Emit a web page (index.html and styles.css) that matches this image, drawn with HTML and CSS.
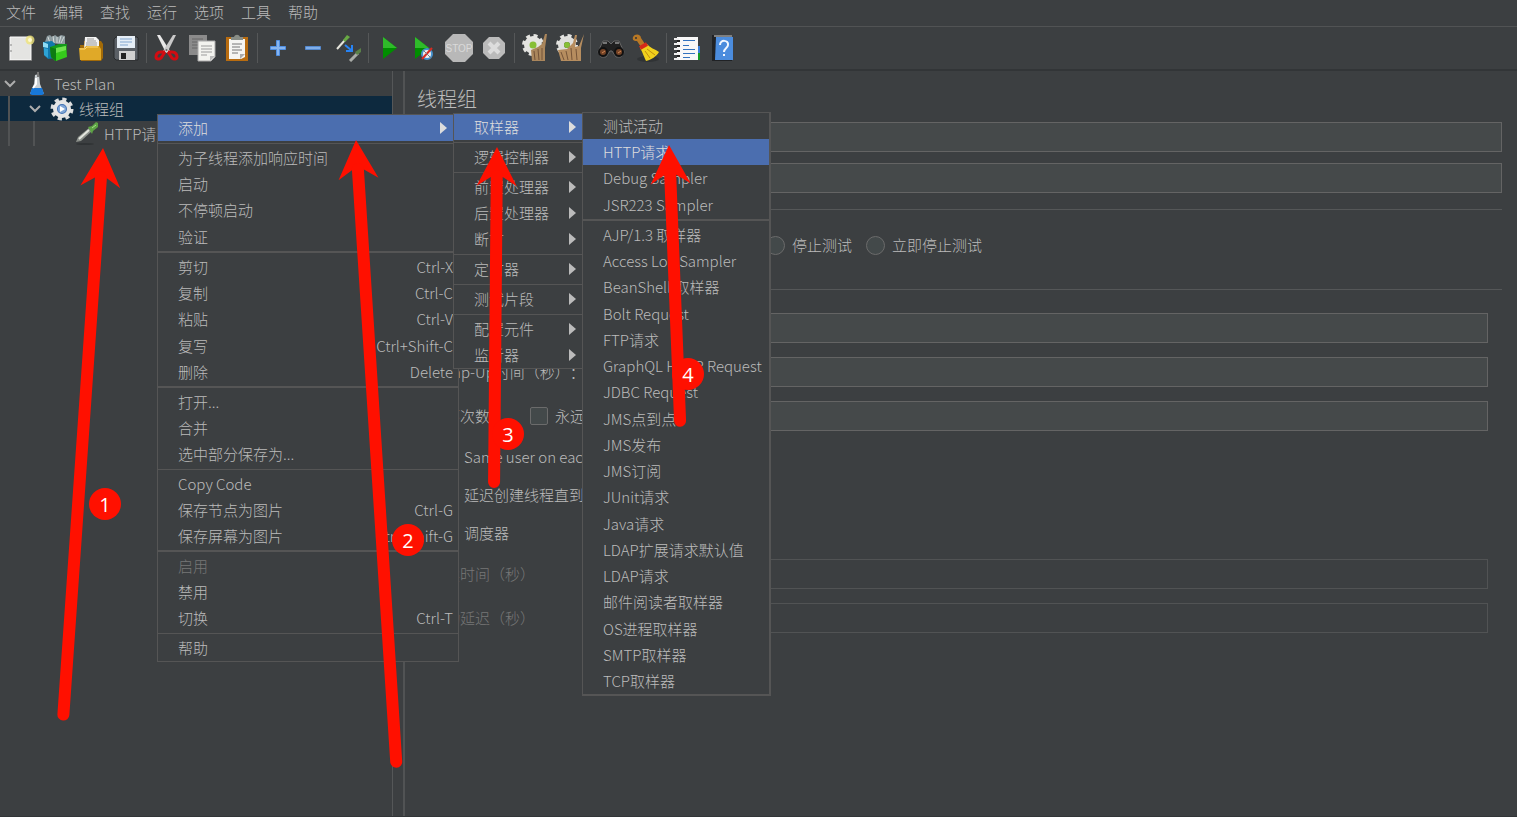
FILE: index.html
```html
<!DOCTYPE html>
<html lang="zh-CN">

<head>
    <meta charset="UTF-8">
    <meta name="viewport" content="width=device-width, initial-scale=1.0">
    <title>线程组</title>
    <link rel="stylesheet" href="styles.css">
</head>

<body>
    <nav class="menubar">
        <button>文件</button>
        <button>编辑</button>
        <button>查找</button>
        <button>运行</button>
        <button>选项</button>
        <button>工具</button>
        <button>帮助</button>
    </nav>

    <div class="toolbar">
        <button aria-label="新建">
            <svg viewBox="0 0 28 28"><path d="M3 3h21v23H3z" fill="#e4e4e2" stroke="#fafafa"/><path d="M3 11h2M3 17h2" stroke="#888"/><path d="M2 26.500h23" stroke="#777"/><circle cx="23" cy="6" r="4.500" fill="#efe37a" opacity=".8"/><circle cx="23" cy="6" r="2" fill="#fffbd0"/></svg>
        </button>
        <button aria-label="模板">
            <svg viewBox="0 0 28 28"><path d="M3 8l2-6 3-1 2 2 3-2 3 2 3-2 4 1v9z" fill="#8d9b9f"/><path d="M6 3l2 6M11 2l1 7M15 3v6M19 2l-2 7M22 3l-3 6" stroke="#d4dada"/><path d="M1 8l9-1 3 3v14l-7 1-4-4z" fill="#1178ac"/><path d="M1 8l5 2v4l-5-1z" fill="#8fdcf5"/><path d="M2 14l4 1v9l-4-3z" fill="#2ea3d6"/><path d="M8 13l9-3h8l-1 12-11 5-4-4z" fill="#149a1b"/><path d="M8 13l6 2v12l-5-4z" fill="#0d7b12"/><path d="M14 14l10-2 1 11-11 4z" fill="#35c91b"/><path d="M14 14l10-2v4l-10 3z" fill="#6fe34e"/></svg>
        </button>
        <button aria-label="打开">
            <svg viewBox="0 0 28 28"><path d="M3 11h4V7h17l2 3v14l-2 3H4z" fill="#a36b08"/><path d="M8 3h11l3 3v9H7z" fill="#f4f4f4"/><path d="M10 5h7M10 7h9M9 9h11M9 11h11" stroke="#999"/><path d="M2 14h5l2-2h13l2 3v11H3z" fill="#e0a928"/><path d="M3 15h5l2-2h11" stroke="#ffda76" fill="none"/></svg>
        </button>
        <button aria-label="保存">
            <svg viewBox="0 0 28 28"><path d="M4 3h21l1 1v22H4l-2-2V5z" fill="#5b6066" stroke="#282a2d"/><path d="M5 2h18v12H5z" fill="#e6eef6"/><path d="M8 5h12M8 8h12M8 11h8" stroke="#82a6cf"/><path d="M7 17h16v9H7z" fill="#d0d0d0"/><path d="M9 19h5v6H9z" fill="#222"/></svg>
        </button>
        <span class="divider"></span>
        <button aria-label="剪切">
            <svg viewBox="0 0 28 28"><path d="M4 1h3l10 16-4 2z" fill="#e8e8e8"/><path d="M23 1h-3L10 17l4 2z" fill="#c9c9c9"/><circle cx="13.500" cy="16" r="1" fill="#666"/><g fill="none" stroke="#d20c12" stroke-width="3"><path d="M12 18H8c-4 0-5 3-5 5s3 3 5 1l4-6M15 18h4c4 0 5 3 5 5s-3 3-5 1l-4-6"/></g></svg>
        </button>
        <button aria-label="复制">
            <svg viewBox="0 0 28 28"><path d="M1 1h18v20H1z" fill="#8b8b8b"/><path d="M4 5h11M4 8h7M4 11h7M4 14h7" stroke="#666"/><path d="M10 7h17v16l-4 4H10z" fill="#f3f3ef" stroke="#aaa"/><path d="M13 12h11M13 15h11M13 18h11M13 21h6" stroke="#9b9b9b"/><path d="M27 22h-5v5z" fill="#bbb"/></svg>
        </button>
        <button aria-label="粘贴">
            <svg viewBox="0 0 28 28"><path d="M3 3h22v24H3z" fill="#b86c10"/><path d="M6 5h16v18l-4 2H6z" fill="#f5f5f2"/><path d="M8 6V3h3c1-3 5-3 6 0h3v3z" fill="#888d86"/><path d="M9 10h10M9 13h8M9 16h10M9 19h6" stroke="#777"/><path d="M22 20h-5v5z" fill="#aaa"/></svg>
        </button>
        <span class="divider"></span>
        <button aria-label="展开">
            <svg viewBox="0 0 28 28"><path d="M12.500 6.500h3v6h6v3h-6v6h-3v-6h-6v-3h6z" fill="#86b5f0" stroke="#4f8fe3"/></svg>
        </button>
        <button aria-label="折叠">
            <svg viewBox="0 0 28 28"><path d="M6.500 12.500h15v3h-15z" fill="#80aee8" stroke="#5489ce"/></svg>
        </button>
        <button aria-label="切换">
            <svg viewBox="0 0 28 28"><path d="M3 15l8-9" stroke="#e5e5dc" stroke-width="2"/><path d="M9 6l4-5 3 2-5 5z" fill="#68a944"/><path d="M11 11l6 5m1-5v6h-6" stroke="#2783f4" stroke-width="2" fill="none"/><path d="M16 27l8-8" stroke="#a9aca8" stroke-width="3"/><path d="M21 18l6-4v4l-4 3z" fill="#5a8048"/></svg>
        </button>
        <span class="divider"></span>
        <button aria-label="启动">
            <svg viewBox="0 0 28 28"><path d="M8 3l14 11L8 25z" fill="#008d00"/><path d="M8 3l14 11H8z" fill="#2fbb2a"/></svg>
        </button>
        <button aria-label="不停顿启动">
            <svg viewBox="0 0 28 28"><path d="M5 3l14 11L5 25z" fill="#008d00"/><path d="M5 3l14 11H5z" fill="#2fbb2a"/><circle cx="17" cy="20" r="5" fill="#eee" stroke="#4692cf" stroke-width="2"/><path d="M12 25l10-11" stroke="#d62c22" stroke-width="2"/><path d="M13 16l8 8" stroke="#71808b"/></svg>
        </button>
        <button aria-label="停止">
            <svg viewBox="0 0 28 28"><path d="M8 0h12l8 8v12l-8 8H8l-8-8V8z" fill="#b8b8b8"/><text x="14" y="18" class="stop-text">STOP</text></svg>
        </button>
        <button aria-label="关闭">
            <svg viewBox="0 0 28 28"><path d="M9 3h10l6 6v10l-6 6H9l-6-6V9z" fill="#bbb"/><path d="M9 9l10 10M19 9L9 19" stroke="#ddd" stroke-width="4"/></svg>
        </button>
        <span class="divider"></span>
        <button aria-label="清除">
            <svg viewBox="0 0 28 28"><circle cx="12" cy="11" r="6" fill="none" stroke="#e4e4e1" stroke-width="6"/><circle cx="12" cy="11" r="9.500" fill="none" stroke="#e4e4e1" stroke-width="3" stroke-dasharray="4 3.500"/><circle cx="12" cy="11" r="3.500" fill="#87bf35"/><path d="M26 0l-2 14v13H11l-1-11 7-3 4-3 3-10z" fill="#aa865c"/><path d="M13 17l1 9M17 15l1 11M21 14v12" stroke="#725238"/></svg>
        </button>
        <button aria-label="清除全部">
            <svg viewBox="0 0 28 28"><circle cx="11" cy="11" r="6" fill="none" stroke="#dfdfdc" stroke-width="6"/><circle cx="11" cy="11" r="9.500" fill="none" stroke="#e4e4e1" stroke-width="3" stroke-dasharray="4 3.500"/><circle cx="11" cy="11" r="3" fill="#87bf35"/><path d="M19 1l-2 8-6 6-9 1 3 11h20V14l3-14-5 12-4 1 2-12z" fill="#b68d5f"/><path d="M5 18l3 8M10 17l2 9M15 14l1 12M20 15l1 11" stroke="#755438"/></svg>
        </button>
        <span class="divider"></span>
        <button aria-label="查找">
            <svg viewBox="0 0 28 28"><path d="M6 7l5 0 3 3 3-3h5l5 11-3 5h-5l-4-6h-2l-4 6H4l-3-5z" fill="#202020" stroke="#666"/><path d="M6 9h4M18 9h4" stroke="#ccc"/><circle cx="6" cy="18" r="4" fill="#744326" stroke="#111" stroke-width="2"/><circle cx="22" cy="18" r="4" fill="#744326" stroke="#111" stroke-width="2"/><path d="M5 19l3-2M21 19l3-2" stroke="#d28752"/></svg>
        </button>
        <button aria-label="重置查找">
            <svg viewBox="0 0 28 28"><ellipse cx="16" cy="25" rx="11" ry="3" fill="#303335"/><path d="M1 3c2-4 8-3 8 1l4 6-4 3-4-6C2 7 0 6 1 3z" fill="#b87825"/><circle cx="4" cy="4" r="1" fill="#333"/><path d="M8 14l7-4c3 4 8 5 12 8-2 4-8 8-13 9-2-4-3-8-6-13z" fill="#f0d01c"/><path d="M15 15l8 6M13 17l5 7" stroke="#c18c10"/><path d="M8 14l7-4" stroke="#d52a19" stroke-width="4"/></svg>
        </button>
        <span class="divider"></span>
        <button aria-label="函数助手">
            <svg viewBox="0 0 28 28"><path d="M24 12h3v7h-3z" fill="#3a7fd9"/><path d="M24 19h3v7h-3z" fill="#159a24"/><path d="M4 3h21v23H4z" fill="#f8f8f8"/><path d="M1 5h5M1 10h5M1 15h5M1 20h5M1 25h5" stroke="#eee" stroke-width="2"/><path d="M4 7h3M4 12h3M4 17h3M4 22h3" stroke="#222" stroke-width="2"/><path d="M10 6.500h12M10 11.500h6M10 15.500h12M10 19.500h12M10 23.500h7" stroke="#3272be"/></svg>
        </button>
        <button aria-label="帮助">
            <svg viewBox="0 0 28 28"><path d="M4 1h20v26H4z" fill="#202225"/><path d="M8 3h17v23H7z" fill="#4b8cdd"/><path d="M6 2h18" stroke="#ddd"/><path d="M12 11c0-6 9-5 8 0 0 3-4 3-4 7m0 2v2" stroke="#f2f7ff" stroke-width="2" fill="none"/></svg>
        </button>
    </div>

    <main class="main">
        <ul class="tree">
            <li class="node">
                <svg class="chevron" viewBox="0 0 12 12"><path d="M1 3l5 5 5-5"/></svg>
                <svg class="node-icon" viewBox="0 0 24 24"><path d="M10 3l4-1 1 10 4 10H5l4-10z" fill="#c9cfd2"/><path d="M13 0v5" stroke="#777" stroke-width="2"/><path d="M7 16h10l2 6-2 1H7l-2-1z" fill="#1878d8"/><path d="M11 6v6l-3 4" stroke="#fff" stroke-width="2" fill="none"/></svg>
                <span>Test Plan</span>
            </li>
            <li class="node selected">
                <i class="guide"></i>
                <svg class="chevron" viewBox="0 0 12 12"><path d="M1 3l5 5 5-5"/></svg>
                <svg class="node-icon" viewBox="0 0 24 24"><circle cx="12" cy="12" r="9.500" fill="none" stroke="#dedede" stroke-width="4" stroke-dasharray="4 3.460"/><circle cx="12" cy="12" r="7" fill="#3f70b3" stroke="#e6e6e6" stroke-width="4"/><circle cx="12" cy="12" r="4" fill="#7fa5d6"/><path d="M10 9l5 3-5 3z" fill="#fff"/></svg>
                <span>线程组</span>
            </li>
            <li class="node">
                <i class="guide"></i><i class="guide"></i>
                <svg class="node-icon" viewBox="0 0 24 24"><ellipse cx="10" cy="22" rx="9" ry="1" fill="#303335"/><path d="M1 20l2-5L14 6l3 3L6 19z" fill="#8c918b"/><path d="M4 17L14 8" stroke="#e4e6df" stroke-width="2"/><path d="M13 5l4-1 4-4 2 1v4l-5 4-1 3z" fill="#5da344"/><path d="M17 6l4-3" stroke="#a9df8d"/></svg>
                <span>HTTP请求</span>
            </li>
        </ul>

        <form class="panel">
            <h1>线程组</h1>
            <div class="row">
                <label for="name">名称：</label>
                <input id="name" type="text">
            </div>
            <div class="row">
                <label for="comment">注释：</label>
                <input id="comment" type="text">
            </div>

            <div class="section-title">在取样器错误后要执行的动作</div>
            <div class="radios">
                <label><input type="radio" name="action">继续</label>
                <label><input type="radio" name="action">启动下一进程循环</label>
                <label><input type="radio" name="action">停止线程</label>
                <label><input type="radio" name="action">停止测试</label>
                <label><input type="radio" name="action">立即停止测试</label>
            </div>

            <div class="section-title">线程属性</div>
            <div class="props">
                <div class="row">
                    <label for="threads">线程数：</label>
                    <input id="threads" type="text">
                </div>
                <div class="row">
                    <label for="ramp">Ramp-Up时间（秒）：</label>
                    <input id="ramp" type="text">
                </div>
                <div class="row">
                    <label class="short" for="loops">循环次数</label>
                    <label class="check"><input type="checkbox">永远</label>
                    <input id="loops" type="text">
                </div>
                <label class="check line"><input type="checkbox">Same user on each iteration</label>
                <label class="check line"><input type="checkbox">延迟创建线程直到需要</label>
                <label class="check line"><input type="checkbox">调度器</label>
                <div class="row">
                    <label class="off" for="duration">持续时间（秒）</label>
                    <input id="duration" type="text" disabled>
                </div>
                <div class="row">
                    <label class="off" for="delay">启动延迟（秒）</label>
                    <input id="delay" type="text" disabled>
                </div>
            </div>
        </form>
    </main>

    <!-- 右键菜单 -->
    <div class="menu menu-main">
        <div class="group">
            <button class="active arrow">添加</button>
        </div>
        <div class="group">
            <button>为子线程添加响应时间</button>
            <button>启动</button>
            <button>不停顿启动</button>
            <button>验证</button>
        </div>
        <div class="group thick">
            <button>剪切<kbd>Ctrl-X</kbd></button>
            <button>复制<kbd>Ctrl-C</kbd></button>
            <button>粘贴<kbd>Ctrl-V</kbd></button>
            <button>复写<kbd>Ctrl+Shift-C</kbd></button>
            <button>删除<kbd>Delete</kbd></button>
        </div>
        <div class="group thick">
            <button>打开...</button>
            <button>合并</button>
            <button>选中部分保存为...</button>
        </div>
        <div class="group">
            <button>Copy Code</button>
            <button>保存节点为图片<kbd>Ctrl-G</kbd></button>
            <button>保存屏幕为图片<kbd>Ctrl+Shift-G</kbd></button>
        </div>
        <div class="group thick">
            <button disabled>启用</button>
            <button>禁用</button>
            <button>切换<kbd>Ctrl-T</kbd></button>
        </div>
        <div class="group">
            <button>帮助</button>
        </div>
    </div>

    <div class="menu menu-add">
        <div class="group">
            <button class="active arrow">取样器</button>
        </div>
        <div class="group">
            <button class="arrow">逻辑控制器</button>
        </div>
        <div class="group">
            <button class="arrow">前置处理器</button>
            <button class="arrow">后置处理器</button>
            <button class="arrow">断言</button>
        </div>
        <div class="group">
            <button class="arrow">定时器</button>
        </div>
        <div class="group">
            <button class="arrow">测试片段</button>
        </div>
        <div class="group">
            <button class="arrow">配置元件</button>
            <button class="arrow">监听器</button>
        </div>
    </div>

    <div class="menu menu-sampler">
        <div class="group">
            <button>测试活动</button>
            <button class="active">HTTP请求</button>
            <button>Debug Sampler</button>
            <button>JSR223 Sampler</button>
        </div>
        <div class="group thick">
            <button>AJP/1.3 取样器</button>
            <button>Access Log Sampler</button>
            <button>BeanShell 取样器</button>
            <button>Bolt Request</button>
            <button>FTP请求</button>
            <button>GraphQL HTTP Request</button>
            <button>JDBC Request</button>
            <button>JMS点到点</button>
            <button>JMS发布</button>
            <button>JMS订阅</button>
            <button>JUnit请求</button>
            <button>Java请求</button>
            <button>LDAP扩展请求默认值</button>
            <button>LDAP请求</button>
            <button>邮件阅读者取样器</button>
            <button>OS进程取样器</button>
            <button>SMTP取样器</button>
            <button>TCP取样器</button>
        </div>
    </div>

    <!-- 步骤标注 -->
    <svg class="marks" width="800" height="800" viewBox="0 0 800 800">
        <defs>
            <path id="head" d="M0 0L20 39L6 30H-6L-20 39z"/>
        </defs>
        <g transform="translate(103 148) rotate(4)"><use href="#head"/><path class="shaft" d="M0 29V568"/></g>
        <g transform="translate(356 140) rotate(-3.700)"><use href="#head"/><path class="shaft" d="M0 29V623"/></g>
        <g transform="translate(497 147) rotate(.500)"><use href="#head"/><path class="shaft" d="M0 29V335"/></g>
        <g transform="translate(669 145) rotate(-2.300)"><use href="#head"/><path class="shaft" d="M0 29V276"/></g>
        <circle cx="105" cy="504" r="16"/><text x="105" y="512">1</text>
        <circle cx="408" cy="540" r="16"/><text x="408" y="548">2</text>
        <circle cx="508" cy="434" r="16"/><text x="508" y="442">3</text>
        <circle cx="688" cy="374" r="16"/><text x="688" y="382">4</text>
    </svg>
</body>

</html>
```
FILE: styles.css
```css
* {
    box-sizing: border-box;
}

body {
    margin: 0;
    min-height: 100vh;
    display: flex;
    flex-direction: column;
    position: relative;
    overflow: hidden;
    background-color: #3c3f41;
    color: #bbb;
    font-family: "Noto Sans CJK SC", sans-serif;
    font-size: 15px;
    font-weight: 300;
    line-height: 24px;
    text-spacing-trim: space-all;
}

button {
    padding: 0;
    border: none;
    background: none;
    color: inherit;
    font: inherit;
}

/* 菜单栏 */
.menubar {
    height: 27px;
    padding: 0 6px 2px;
    display: flex;
    gap: 17px;
    border-bottom: 1px solid #515354;
}

/* 工具栏 */
.toolbar {
    height: 44px;
    padding-left: 3px;
    display: flex;
    align-items: center;
    border-bottom: 2px solid #323537;
}

.toolbar button {
    width: 35px;
    height: 28px;
}

.toolbar svg {
    display: block;
    width: 28px;
    height: 28px;
    margin: auto;
}

.divider {
    width: 1px;
    height: 30px;
    margin: 0 2px 0 3px;
    background-color: #555758;
}

.stop-text {
    font-family: "Liberation Sans", sans-serif;
    font-size: 10px;
    text-anchor: middle;
    fill: #dadada;
}

.main {
    flex: 1;
    display: flex;
    border-bottom: 1px solid #323537;
}

/* 左侧树 */
.tree {
    width: 393px;
    margin: 0;
    padding: 0;
    list-style: none;
    border-right: 1px solid #555758;
}

.node {
    height: 25px;
    padding-left: 4px;
    display: flex;
    align-items: center;
}

.selected {
    background-color: #0d293e;
}

.guide {
    width: 2px;
    height: 25px;
    margin: 0 19px 0 4px;
    background-color: #515354;
}

.chevron {
    width: 12px;
    height: 12px;
    margin-right: 9px;
    fill: none;
    stroke: #adadad;
    stroke-width: 2;
}

.guide + .node-icon {
    margin-left: 21px;
}

.node-icon {
    width: 24px;
    height: 24px;
    margin-right: 5px;
}

/* 右侧面板 */
.panel {
    flex: 1;
    margin-left: 10px;
    padding: 13px 15px 0 12px;
    border-left: 2px solid #515354;
}

h1 {
    margin: 0 0 8px;
    font-size: 20px;
    font-weight: 300;
    line-height: 30px;
}

.row {
    margin-bottom: 11px;
    display: flex;
    align-items: center;
}

.row > label {
    width: 80px;
}

input[type="text"] {
    flex: 1;
    height: 30px;
    padding: 0 6px;
    border: 1px solid #646464;
    background-color: #45494a;
    color: #bbb;
    font: inherit;
}

input[type="text"]:disabled {
    border-color: #515354;
    background-color: #3c3f41;
}

.section-title {
    height: 20px;
    margin: -5px 0 14px;
    display: flex;
    align-items: center;
    gap: 6px;
}

.section-title::after {
    content: "";
    flex: 1;
    height: 1px;
    background-color: #555758;
}

.radios {
    margin-bottom: 27px;
    padding-left: 19px;
    display: flex;
    gap: 14px;
}

.radios label,
.check {
    display: flex;
    align-items: center;
    gap: 7px;
}

input[type="radio"],
input[type="checkbox"] {
    appearance: none;
    width: 19px;
    height: 19px;
    margin: 0;
    border: 1px solid #6b6b6b;
    border-radius: 50%;
    background-color: #43494a;
}

input[type="checkbox"] {
    width: 18px;
    height: 18px;
    border-radius: 2px;
}

.props {
    padding: 0 14px 0 13px;
    display: flex;
    flex-direction: column;
    gap: 14px;
}

.props .row {
    margin: 0;
}

.props .row > label {
    width: 170px;
}

.props .row > .short {
    width: 100px;
}

.props .row > .check {
    width: 70px;
}

.line {
    height: 24px;
    padding-left: 9px;
}

.off {
    color: #777;
}

/* 弹出菜单 */
.menu {
    position: absolute;
    border: 1px solid #555;
    background-color: #3c3f41;
}

.menu-main {
    top: 114px;
    left: 157px;
    width: 302px;
}

.menu-add {
    top: 113px;
    left: 453px;
    width: 130px;
}

.menu-sampler {
    top: 112px;
    left: 582px;
    width: 189px;
    border-right-width: 2px;
    border-bottom-width: 2px;
}

.group + .group {
    margin-top: 2px;
    padding-top: 1px;
    border-top: 1px solid #555;
}

.group + .thick {
    margin-top: 1px;
    border-top-width: 2px;
}

.menu button {
    width: 100%;
    height: 26px;
    padding: 0 5px 0 20px;
    display: flex;
    align-items: center;
    justify-content: space-between;
    white-space: nowrap;
}

.menu button:nth-child(4n) {
    height: 27px;
}

.menu .active {
    background-color: #4b6eaf;
    color: #ddd;
}

.menu button:disabled {
    color: #777;
}

kbd {
    font: inherit;
}

.arrow::after {
    content: "";
    margin-right: 6px;
    border: 6px solid transparent;
    border-right: none;
    border-left: 7px solid #bbb;
}

.menu-add .arrow::after {
    margin-right: 1px;
}

.active.arrow::after {
    border-left-color: #ddd;
}

/* 红色箭头和编号 */
.marks {
    position: absolute;
    top: 0;
    left: 0;
    fill: #ff1000;
    pointer-events: none;
}

.shaft {
    stroke: #ff1000;
    stroke-width: 12;
    stroke-linecap: round;
}

.marks text {
    fill: #fff;
    font-family: "Open Sans", sans-serif;
    font-size: 20px;
    font-weight: 500;
    text-anchor: middle;
}
```
